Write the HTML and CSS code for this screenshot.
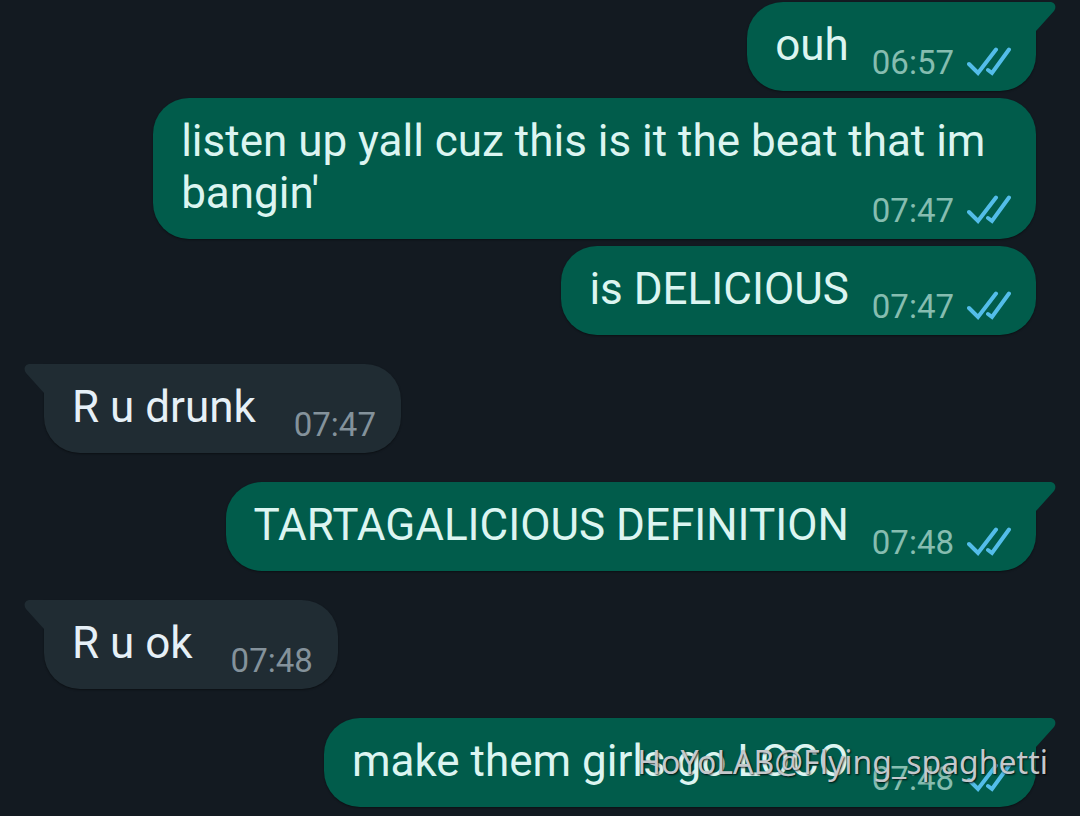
FILE: index.html
```
<!DOCTYPE html>
<html lang="en">
<head>
    <meta charset="UTF-8">
    <meta name="viewport" content="width=device-width, initial-scale=1.0">
    <title>Chat</title>
    <link rel="stylesheet" href="styles.css">
</head>
<body>
    <svg class="defs" aria-hidden="true">
        <symbol id="ticks" viewBox="0 0 44 32">
            <path d="M2 17 L11 26 L29 2.5 M21 23 L25 26 L42 2.5" fill="none" stroke="currentColor" stroke-width="4" stroke-linecap="round" stroke-linejoin="miter"/>
        </symbol>
        <symbol id="tail" viewBox="0 0 21 32">
            <path d="M0 0 H15 C20 0 22 5 19 9 L1 29 V32 H0 Z" fill="currentColor"/>
        </symbol>
    </svg>

    <main class="chat">
        <div class="message sent first">
            <svg class="tail"><use href="#tail"/></svg>
            <span class="text">ouh</span>
            <span class="meta"><time>06:57</time><svg class="ticks"><use href="#ticks"/></svg></span>
        </div>
        <div class="message sent">
            <span class="text">listen up yall cuz this is it the beat that im bangin'</span>
            <span class="meta"><time>07:47</time><svg class="ticks"><use href="#ticks"/></svg></span>
        </div>
        <div class="message sent">
            <span class="text">is DELICIOUS</span>
            <span class="meta"><time>07:47</time><svg class="ticks"><use href="#ticks"/></svg></span>
        </div>
        <div class="message received first">
            <svg class="tail"><use href="#tail"/></svg>
            <span class="text">R u drunk</span>
            <span class="meta"><time>07:47</time></span>
        </div>
        <div class="message sent first">
            <svg class="tail"><use href="#tail"/></svg>
            <span class="text">TARTAGALICIOUS DEFINITION</span>
            <span class="meta"><time>07:48</time><svg class="ticks"><use href="#ticks"/></svg></span>
        </div>
        <div class="message received first">
            <svg class="tail"><use href="#tail"/></svg>
            <span class="text">R u ok</span>
            <span class="meta"><time>07:48</time></span>
        </div>
        <div class="message sent first">
            <svg class="tail"><use href="#tail"/></svg>
            <span class="text">make them girls go LOCO</span>
            <span class="meta"><time>07:48</time><svg class="ticks"><use href="#ticks"/></svg></span>
        </div>
        <p class="watermark">HoYoLAB@Flying_spaghetti</p>
    </main>
</body>
</html>
```

FILE: styles.css
```
*{
    margin: 0;
    padding: 0;
    box-sizing: border-box;
}

body{
    background-color: #131a21;
    font-family: Roboto, sans-serif;
}

.defs{
    display: none;
}

.chat{
    position: relative;
    display: flex;
    flex-direction: column;
    gap: 7px;
    padding: 2px 44px 9px;
}

.message{
    position: relative;
    display: flow-root;
    max-width: 89%;
    padding: 17px 25px 9px 28px;
    border-radius: 36px;
    color: #dcf5f1;
    font-size: 44px;
    line-height: 52px;
    box-shadow: 0 1px 2px rgba(0, 0, 0, 0.4);
}

.sent{
    align-self: flex-end;
    background-color: #015c4b;
}

.received{
    align-self: flex-start;
    background-color: #202c33;
    color: #e6f0f7;
}

.first{
    margin-top: 22px;
}

.first:first-child{
    margin-top: 0;
}

.sent.first{
    border-top-right-radius: 0;
}

.received.first{
    border-top-left-radius: 0;
}

.tail{
    position: absolute;
    top: 0;
    width: 21px;
    height: 32px;
}

.sent .tail{
    left: calc(100% - 1px);
    color: #015c4b;
}

.received .tail{
    right: calc(100% - 1px);
    color: #202c33;
    transform: scaleX(-1);
}

.meta{
    float: right;
    display: flex;
    align-items: center;
    gap: 13px;
    margin: 24px 0 0 23px;
    color: #86bdb0;
    font-size: 33px;
    line-height: 39px;
}

.received .meta{
    margin-left: 38px;
    color: #84929b;
}

.ticks{
    width: 44px;
    height: 32px;
    color: #53bde9;
}

.watermark{
    position: absolute;
    right: 32px;
    bottom: 30px;
    color: #c4c8cc;
    font-family: "Noto Sans", sans-serif;
    font-size: 32px;
    line-height: 48px;
    text-shadow: 1px 1px 2px rgba(0, 0, 0, 0.8);
}
```
